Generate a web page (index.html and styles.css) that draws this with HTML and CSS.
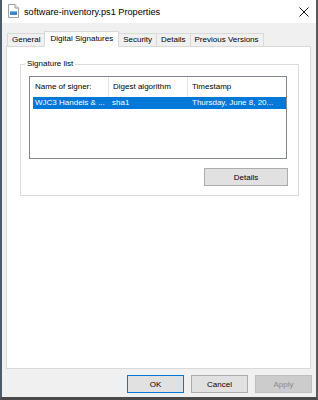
FILE: index.html
```html
<!DOCTYPE html>
<html>
<head>
<meta charset="utf-8">
<title>software-inventory.ps1 Properties</title>
<link rel="stylesheet" href="styles.css">
</head>
<body>
<div class="window">
  <div class="titlebar">
    <svg class="file-icon" width="11" height="14" viewBox="0 0 11 14">
      <path d="M0.5 0.5 H7 L10.5 4 V13.5 H0.5 Z" fill="#ffffff" stroke="#a0a0a0"/>
      <path d="M7 0.5 V4 H10.5" fill="#ececec" stroke="#a0a0a0"/>
      <rect x="2" y="7" width="7" height="4" fill="#3a86d0"/>
      <rect x="2" y="7" width="7" height="1" fill="#7fb6e8"/>
    </svg>
    <span class="title">software-inventory.ps1 Properties</span>
    <svg class="close" width="10" height="10" viewBox="0 0 10 10">
      <path d="M0.5 0.5 L9.5 9.5 M9.5 0.5 L0.5 9.5" stroke="#111" stroke-width="1"/>
    </svg>
  </div>
  <div class="tabs">
    <div class="tab">General</div>
    <div class="tab active">Digital Signatures</div>
    <div class="tab">Security</div>
    <div class="tab">Details</div>
    <div class="tab">Previous Versions</div>
  </div>
  <div class="panel">
    <fieldset class="group">
      <legend class="group-label">Signature list</legend>
      <div class="list">
        <div class="list-head">
          <div class="hcol c1">Name of signer:</div>
          <div class="hcol c2">Digest algorithm</div>
          <div class="hcol c3">Timestamp</div>
        </div>
        <div class="row selected">
          <div class="cell r1">WJC3 Handels &amp; ...</div>
          <div class="cell r2">sha1</div>
          <div class="cell r3">Thursday, June 8, 20...</div>
        </div>
      </div>
      <div class="group-actions">
        <button class="btn details">Details</button>
      </div>
    </fieldset>
  </div>
  <div class="footer">
    <button class="btn default">OK</button>
    <button class="btn">Cancel</button>
    <button class="btn disabled" disabled>Apply</button>
  </div>
</div>
</body>
</html>
```

FILE: styles.css
```css
* { box-sizing: border-box; }
html, body { margin: 0; padding: 0; }
body {
  font-family: "Liberation Sans", Arial, sans-serif;
  font-size: 8px;
  color: #000;
  background: #ffffff;
}
.window {
  width: 318px;
  height: 400px;
  display: flex;
  flex-direction: column;
  background: #f0f0f0;
  border-left: 2px solid #4c5b6a;
  border-right: 2px solid #5a5a5a;
  border-bottom: 3px solid #4a4a4a;
}
.titlebar {
  height: 23px;
  flex: 0 0 23px;
  background: #ffffff;
  display: flex;
  align-items: center;
  padding: 0 7px 0 6px;
}
.file-icon { flex: 0 0 auto; margin-top: -1px; }
.title {
  margin-left: 5px;
  font-size: 9.2px;
  flex: 1;
  white-space: nowrap;
}
.close { flex: 0 0 auto; }
.tabs {
  margin-top: 8px;
  height: 15px;
  flex: 0 0 15px;
  display: flex;
  align-items: flex-end;
  padding-left: 5px;
}
.tab {
  height: 13px;
  line-height: 12px;
  padding: 0 4px;
  border: 1px solid #d9d9d9;
  border-bottom: none;
  background: #f0f0f0;
  margin-left: -1px;
  white-space: nowrap;
}
.tab:first-child { margin-left: 0; }
.tab.active {
  height: 16px;
  line-height: 13px;
  padding: 0 5px;
  background: #ffffff;
  margin-bottom: -1px;
  position: relative;
  z-index: 1;
}
.panel {
  flex: 1;
  margin: 0 5px 0 4px;
  background: #ffffff;
  border: 1px solid #d9d9d9;
  display: flex;
  flex-direction: column;
}
.group {
  margin: 11px 11px 0 13px;
  padding: 6px 11px 9px 8px;
  border: 1px solid #dcdcdc;
  min-width: 0;
}
.group-label {
  padding: 0 2px;
  margin-left: -4px;
  line-height: 12px;
  font-size: 8px;
}
.list {
  height: 83px;
  border: 1px solid #828790;
  background: #ffffff;
}
.list-head {
  height: 20px;
  display: flex;
}
.hcol {
  line-height: 20px;
  white-space: nowrap;
  overflow: hidden;
}
.hcol.c1 { width: 79px; padding-left: 5px; border-right: 1px solid #e5e5e5; }
.hcol.c2 { width: 79px; padding-left: 4px; border-right: 1px solid #e5e5e5; }
.hcol.c3 { flex: 1; padding-left: 4px; }
.row {
  height: 12px;
  margin-left: 3px;
  display: flex;
  line-height: 12px;
}
.row.selected { background: #0078d7; color: #ffffff; }
.cell { white-space: nowrap; overflow: hidden; }
.cell.r1 { width: 75px; padding-left: 2px; }
.cell.r2 { width: 79px; padding-left: 4px; }
.cell.r3 { flex: 1; padding-left: 5px; }
.group-actions {
  display: flex;
  justify-content: flex-end;
  margin-top: 9px;
  margin-right: -1px;
}
.btn {
  font-family: "Liberation Sans", Arial, sans-serif;
  font-size: 8px;
  height: 18px;
  width: 57px;
  padding: 0;
  background: #e1e1e1;
  border: 1px solid #adadad;
  color: #000;
  border-radius: 0;
}
.btn.details { width: 84px; }
.btn.default { border-color: #0078d7; }
.btn.disabled { background: #cccccc; border-color: #bfbfbf; color: #8a8a8a; }
.footer {
  flex: 0 0 28px;
  display: flex;
  justify-content: flex-end;
  align-items: flex-start;
  gap: 7px;
  padding: 6px 4px 0 0;
}
```
